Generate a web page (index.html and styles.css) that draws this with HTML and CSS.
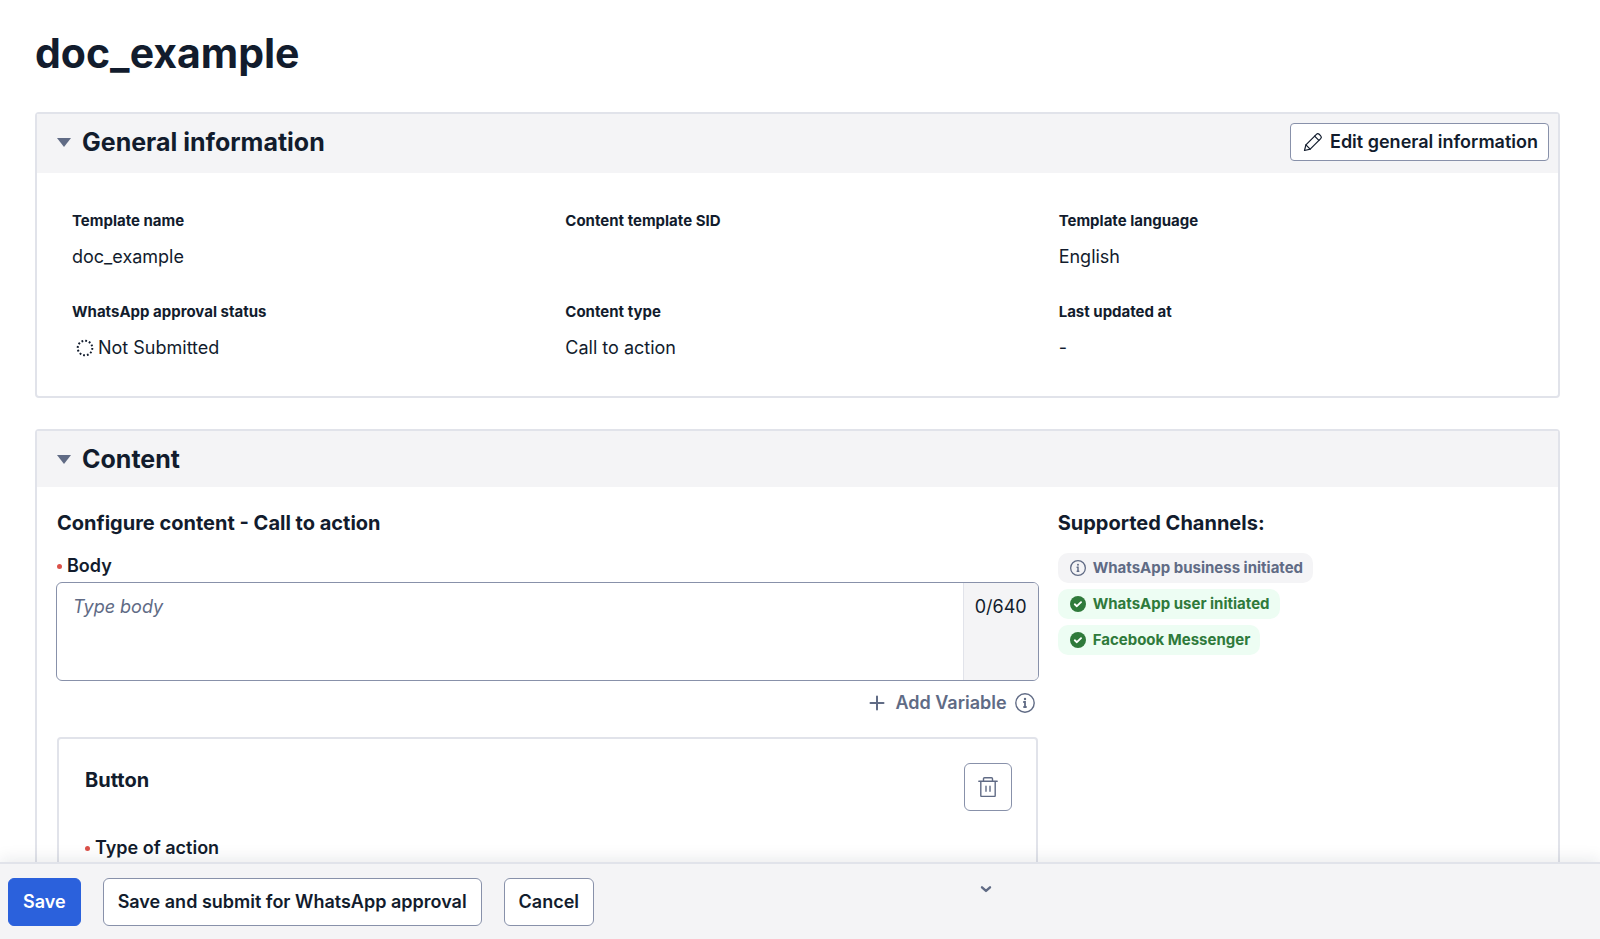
FILE: index.html
```
<!DOCTYPE html>
<html lang="en">

<head>
    <meta charset="UTF-8">
    <meta name="viewport" content="width=device-width, initial-scale=1.0">
    <title>doc_example</title>
    <link rel="stylesheet" href="styles.css">
</head>

<body>
    <main class="page">
        <h1>doc_example</h1>

        <section class="panel">
            <div class="panel-header panel-header-tall">
                <h2>
                    <button class="toggle" type="button" aria-expanded="true">
                        <svg class="caret" viewBox="0 0 14 9"><path d="M0 0h14L7 9z" fill="currentColor"/></svg>
                        General information
                    </button>
                </h2>
                <button class="btn btn-small" type="button">
                    <svg class="icon" viewBox="0 0 20 20" fill="none" stroke="currentColor" stroke-width="1.2" stroke-linecap="round" stroke-linejoin="round">
                        <path d="M1.5 18.5l1.4-5.7L13.4 2.3a2 2 0 0 1 2.8 0l1.5 1.5a2 2 0 0 1 0 2.8L7.2 17.1z"/>
                        <path d="M2.9 12.8l4.3 4.3M11.6 4.1l4.3 4.3"/>
                    </svg>
                    Edit general information
                </button>
            </div>
            <dl class="info">
                <div>
                    <dt>Template name</dt>
                    <dd>doc_example</dd>
                </div>
                <div>
                    <dt>Content template SID</dt>
                    <dd></dd>
                </div>
                <div>
                    <dt>Template language</dt>
                    <dd>English</dd>
                </div>
                <div>
                    <dt>WhatsApp approval status</dt>
                    <dd class="status">
                        <svg class="icon" viewBox="0 0 20 20"><circle cx="10" cy="10" r="7.3" fill="none" stroke="currentColor" stroke-width="2" stroke-dasharray="1.8 2.022"/></svg>
                        Not Submitted
                    </dd>
                </div>
                <div>
                    <dt>Content type</dt>
                    <dd>Call to action</dd>
                </div>
                <div>
                    <dt>Last updated at</dt>
                    <dd>-</dd>
                </div>
            </dl>
        </section>

        <section class="panel">
            <div class="panel-header">
                <h2>
                    <button class="toggle" type="button" aria-expanded="true">
                        <svg class="caret" viewBox="0 0 14 9"><path d="M0 0h14L7 9z" fill="currentColor"/></svg>
                        Content
                    </button>
                </h2>
            </div>
            <div class="content">
                <div class="editor">
                    <h3>Configure content - Call to action</h3>
                    <label class="field-label" for="body">Body</label>
                    <div class="textbox">
                        <textarea id="body" placeholder="Type body"></textarea>
                        <span class="counter">0/640</span>
                    </div>
                    <div class="variable-row">
                        <button class="link-btn" type="button">
                            <svg class="icon" viewBox="0 0 20 20" fill="none" stroke="currentColor" stroke-width="2" stroke-linecap="round"><path d="M10 3.5v13M3.5 10h13"/></svg>
                            Add Variable
                        </button>
                        <button class="info-btn" type="button" aria-label="About variables">
                            <svg viewBox="0 0 20 20"><circle cx="10" cy="10" r="9.2" fill="none" stroke="currentColor" stroke-width="1.4"/><circle cx="10" cy="6" r="1.2" fill="currentColor"/><path d="M8.9 9H10v5M9 14h2" fill="none" stroke="currentColor" stroke-width="1.8" stroke-linecap="round"/></svg>
                        </button>
                    </div>
                    <div class="card">
                        <div class="card-head">
                            <h3>Button</h3>
                            <button class="btn btn-icon" type="button" aria-label="Delete button">
                                <svg viewBox="0 0 20 20" fill="none" stroke="currentColor" stroke-width="1.4" stroke-linecap="round" stroke-linejoin="round">
                                    <path d="M.8 4.3h18.4M2.8 4.3v14.2a1 1 0 0 0 1 1h12.4a1 1 0 0 0 1-1V4.3M5.5 4.3V1.8a1 1 0 0 1 1-1h7a1 1 0 0 1 1 1v2.5M8 9.3v5M12 9.3v5"/>
                                </svg>
                            </button>
                        </div>
                        <div class="field-label">Type of action</div>
                    </div>
                </div>
                <aside class="channels">
                    <h3>Supported Channels:</h3>
                    <ul>
                        <li class="badge">
                            <svg viewBox="0 0 20 20"><circle cx="10" cy="10" r="9.2" fill="none" stroke="currentColor" stroke-width="1.6"/><circle cx="10" cy="6" r="1.2" fill="currentColor"/><path d="M8.9 9H10v5M9 14h2" fill="none" stroke="currentColor" stroke-width="1.8" stroke-linecap="round"/></svg>
                            WhatsApp business initiated
                        </li>
                        <li class="badge badge-ok">
                            <svg viewBox="0 0 20 20"><circle cx="10" cy="10" r="10" fill="currentColor"/><path d="M6 10.4l2.6 2.3 5.2-5" fill="none" stroke="#fff" stroke-width="2.4" stroke-linecap="round" stroke-linejoin="round"/></svg>
                            WhatsApp user initiated
                        </li>
                        <li class="badge badge-ok">
                            <svg viewBox="0 0 20 20"><circle cx="10" cy="10" r="10" fill="currentColor"/><path d="M6 10.4l2.6 2.3 5.2-5" fill="none" stroke="#fff" stroke-width="2.4" stroke-linecap="round" stroke-linejoin="round"/></svg>
                            Facebook Messenger
                        </li>
                    </ul>
                </aside>
            </div>
        </section>
    </main>

    <footer class="actions">
        <button class="btn btn-primary" type="button">Save</button>
        <button class="btn" type="button">Save and submit for WhatsApp approval</button>
        <button class="btn" type="button">Cancel</button>
        <svg class="chevron" viewBox="0 0 20 20"><path d="M6 8.3l4 3.6 4-3.6" fill="none" stroke="currentColor" stroke-width="2.4" stroke-linecap="round" stroke-linejoin="round"/></svg>
    </footer>
</body>

</html>
```
FILE: styles.css
```
* {
    box-sizing: border-box;
}

body {
    margin: 0;
    height: 100vh;
    display: flex;
    flex-direction: column;
    font-family: Inter, "Liberation Sans", sans-serif;
    font-size: 18px;
    line-height: 24px;
    color: #121c2d;
    background: #fff;
}

h1,
h2,
h3,
dl,
dd,
ul {
    margin: 0;
    padding: 0;
}

button,
textarea {
    font: inherit;
    color: inherit;
}

button {
    cursor: pointer;
}

.page {
    flex: 1;
    min-height: 0;
    overflow-y: auto;
    scrollbar-width: none;
    padding: 26px 40px 0 35px;
}

h1 {
    font-size: 41px;
    line-height: 54px;
    font-weight: 700;
    margin-bottom: 32px;
}

h3 {
    font-size: 20px;
    line-height: 28px;
    font-weight: 700;
}

/* panels */

.panel {
    border: 2px solid #e1e3ea;
    border-radius: 4px;
    margin-bottom: 31px;
}

.panel-header {
    display: flex;
    justify-content: space-between;
    align-items: flex-start;
    padding: 9px;
    height: 56px;
    background: #f4f4f6;
}

.panel-header-tall {
    height: 59px;
}

.toggle {
    display: flex;
    align-items: center;
    gap: 11px;
    border: 0;
    padding: 0 0 0 11px;
    background: none;
    font-size: 25px;
    line-height: 38px;
    font-weight: 700;
}

.caret {
    width: 14px;
    height: 9px;
    color: #606b85;
}

.icon {
    width: 20px;
    height: 20px;
}

.info {
    display: grid;
    grid-template-columns: repeat(3, 1fr);
    row-gap: 31px;
    padding: 36px 6px 36px 35px;
}

.info dt {
    font-size: 15px;
    font-weight: 700;
    margin-bottom: 12px;
}

.info dd {
    height: 24px;
}

.info .status {
    display: flex;
    align-items: center;
    gap: 3px;
    padding-left: 3px;
}

/* buttons */

.btn {
    display: flex;
    align-items: center;
    justify-content: center;
    gap: 7px;
    height: 48px;
    padding: 0 14px;
    border: 1px solid #8891aa;
    border-radius: 6px;
    background: #fff;
    font-weight: 600;
}

.btn-small {
    height: 38px;
    padding: 0 10px 0 12px;
    border-radius: 4px;
}

.btn-icon {
    width: 48px;
    padding: 0;
    color: #606b85;
}

.btn-icon svg {
    width: 20px;
    height: 20px;
}

.btn-primary {
    border-color: #2b61dc;
    background: #2b61dc;
    color: #fff;
}

/* content */

.content {
    display: grid;
    grid-template-columns: 2fr 1fr;
    gap: 20px;
    padding: 22px 10px 60px 20px;
}

.field-label {
    display: flex;
    align-items: center;
    gap: 5px;
    font-weight: 600;
}

.field-label::before {
    content: "";
    width: 5px;
    height: 5px;
    border-radius: 50%;
    background: #db5149;
}

.editor > .field-label {
    margin: 17px 0 4px;
}

.textbox {
    display: flex;
    height: 99px;
    margin: 0 -1px;
    border: 1px solid #8891aa;
    border-radius: 6px;
    overflow: hidden;
}

.textbox textarea {
    flex: 1;
    border: 0;
    outline: 0;
    resize: none;
    padding: 12px 16px;
    background: none;
}

.textbox textarea::placeholder {
    font-style: italic;
    color: #606b85;
    opacity: 1;
}

.counter {
    padding: 12px 11px;
    border-left: 1px solid #e1e3ea;
    background: #f4f4f6;
}

.variable-row {
    display: flex;
    justify-content: flex-end;
    align-items: center;
    gap: 8px;
    margin: 10px 3px 22px;
    color: #606b85;
}

.link-btn,
.info-btn {
    display: flex;
    align-items: center;
    gap: 8px;
    border: 0;
    padding: 0;
    background: none;
    font-weight: 600;
}

.info-btn svg {
    width: 20px;
    height: 20px;
}

.card {
    border: 2px solid #e1e3ea;
    border-radius: 4px;
    padding: 24px 24px 90px 26px;
}

.card-head {
    display: flex;
    justify-content: space-between;
    align-items: flex-start;
    margin-bottom: 25px;
}

.card-head h3 {
    padding-top: 3px;
}

.channels ul {
    display: flex;
    flex-direction: column;
    align-items: flex-start;
    gap: 6px;
    margin-top: 16px;
    list-style: none;
}

.badge {
    display: flex;
    align-items: center;
    gap: 7px;
    height: 30px;
    padding: 0 10px 0 12px;
    border-radius: 10px;
    background: #f4f4f6;
    color: #606b85;
    font-size: 15px;
    font-weight: 700;
}

.badge svg {
    width: 16px;
    height: 16px;
}

.badge-ok {
    background: #edfdf3;
    color: #2f7a3b;
}

/* bottom bar */

.actions {
    position: relative;
    display: flex;
    gap: 22px;
    padding: 14px 8px 13px;
    border-top: 2px solid #e1e3ea;
    background: #f4f4f6;
    box-shadow: 0 -2px 16px rgba(18, 28, 45, 0.1);
}

.chevron {
    position: absolute;
    left: 61%;
    top: 15px;
    width: 20px;
    height: 20px;
    color: #606b85;
}
```
